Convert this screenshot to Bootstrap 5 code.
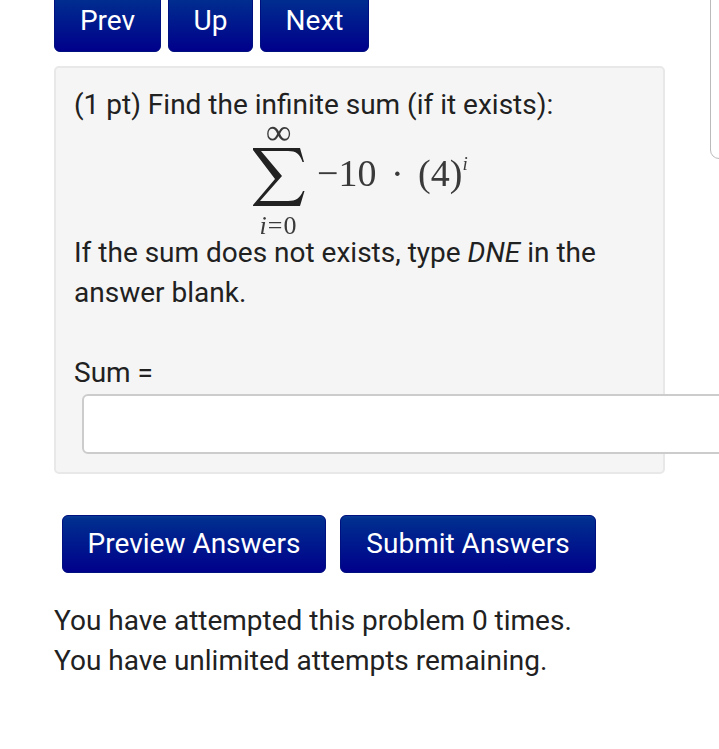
<!DOCTYPE html>
<html lang="en">
<head>
<meta charset="utf-8">
<title>Problem</title>
<link rel="stylesheet" href="https://cdn.jsdelivr.net/npm/bootstrap@5.3.0/dist/css/bootstrap.min.css">
<style>
html, body { overflow: hidden; height: 749px; }
body { font-family: Roboto, "Liberation Sans", sans-serif; font-size: 28px; line-height: 40px; color: #212121; background: #fff; position: relative; }
.page-wrap { padding-left: 54px; width: 665px; box-sizing: content-box; }
.nav-btns { margin-top: -6px; gap: 7px; }
.btn-wwk { background: linear-gradient(#0a3a96 0, #002f8f 5%, #00008b 100%); background-color: #000b8c; color: #fff; font-size: 28px; line-height: 40px; border: 1px solid #00107e; border-radius: 6px; height: 58px; padding: 8px 25px; }
.btn-wwk:hover { color: #fff; }
.nav-btns .btn-wwk { padding-top: 6px; }
.btn-prev { width: 107px; padding-left: 0; padding-right: 0; }
.btn-up { width: 85px; padding-left: 0; padding-right: 0; }
.btn-next { width: 109px; padding-left: 0; padding-right: 0; }
.problem-well { margin-top: 14px; width: 611px; height: 408px; background: #f5f5f5; border: 2px solid #e8e8e8; border-radius: 5px; padding: 17px 18px; }
.math-block { height: 108px; margin-left: 178px; font-family: "Liberation Serif", "DejaVu Serif", serif; color: #3a3a3a; filter: blur(.45px); }
.sigma-col { width: 53px; }
.sigma-col span { font-size: 26px; line-height: 16px; height: 16px; white-space: nowrap; letter-spacing: 1px; }
.sigma-col .sigma-top { font-size: 36px; line-height: 14px; height: 14px; letter-spacing: 0; }
.sigma-col svg { width: 53px; height: 58px; display: block; margin: 9px 0 12px; flex: none; }
.math-expr { font-size: 38px; line-height: 40px; margin-left: 12px; margin-top: 28px; white-space: nowrap; word-spacing: 5px; }
.math-expr sup { font-size: 19px; top: -.85em; font-style: italic; }
.sum-label { margin-top: 40px; }
.answer-field { margin: 1px 0 0 8px; width: 700px; max-width: none; height: 60px; background: #fff; border: 2px solid #ccc; border-radius: 6px; }
.submit-row { margin-top: 41px; margin-left: 8px; gap: 14px; }
.btn-preview { width: 264px; padding-left: 0; padding-right: 0; }
.btn-submit { width: 256px; padding-left: 0; padding-right: 0; }
.attempts { margin-top: 28px; }
.side-edge { position: absolute; top: -10px; left: 710px; width: 40px; height: 169px; border: 1px solid #bbb; border-radius: 0 0 0 9px; background: #fff; }
</style>
</head>
<body>
<div class="side-edge"></div>
<div class="page-wrap">
  <div class="nav-btns d-flex">
    <a class="btn btn-wwk btn-prev" href="#">Prev</a>
    <a class="btn btn-wwk btn-up" href="#">Up</a>
    <a class="btn btn-wwk btn-next" href="#">Next</a>
  </div>
  <div class="problem-well">
    <div>(1 pt) Find the infinite sum (if it exists):</div>
    <div class="math-block d-flex">
      <div class="sigma-col d-flex flex-column align-items-center">
        <span class="sigma-top">∞</span>
        <svg viewBox="0 0 53 58" aria-hidden="true"><path d="M1 0H48L52 14H50.500C48 6 44 3 36 3H9L30 28L8 53H36C44 53 48 50 51 43H52.500L48 58H1V57L23 31L1 2Z" fill="#222"/></svg>
        <span><i>i</i>=0</span>
      </div>
      <div class="math-expr">−10 · (4)<sup>i</sup></div>
    </div>
    <div>If the sum does not exists, type <em>DNE</em> in the answer blank.</div>
    <div class="sum-label">Sum =</div>
    <input class="form-control answer-field" type="text" aria-label="Sum">
  </div>
  <div class="submit-row d-flex">
    <button class="btn btn-wwk btn-preview" type="button">Preview Answers</button>
    <button class="btn btn-wwk btn-submit" type="button">Submit Answers</button>
  </div>
  <p class="attempts mb-0">You have attempted this problem 0 times.<br>You have unlimited attempts remaining.</p>
</div>
</body>
</html>
